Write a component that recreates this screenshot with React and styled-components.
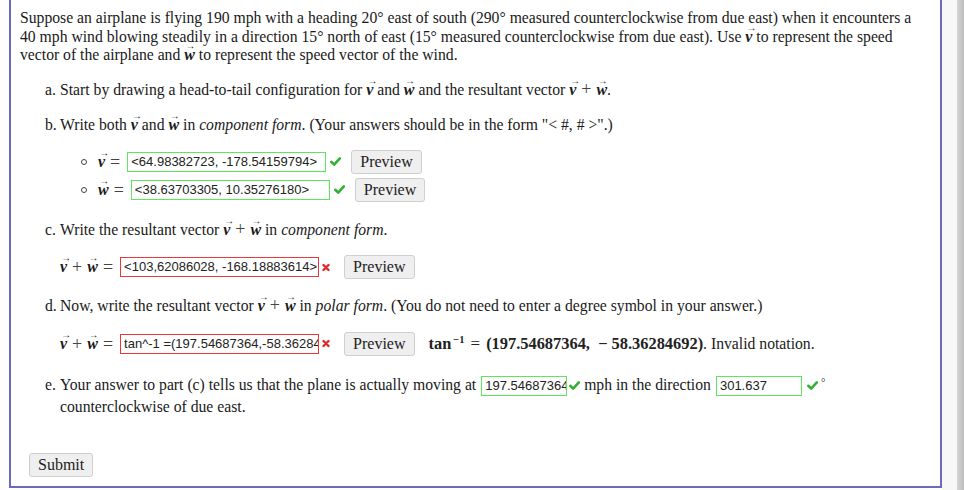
import React from 'react';
import styled, { createGlobalStyle } from 'styled-components';

const GlobalStyle = createGlobalStyle`
  html, body {
    margin: 0;
    padding: 0;
    background: #ffffff;
    overflow: hidden;
  }
  body {
    font-family: "Liberation Serif", "Times New Roman", serif;
    color: #1a1a1a;
  }
`;

const Screen = styled.div`
  display: flex;
  height: 490px;
  width: 964px;
`;

const Main = styled.div`
  width: 942px;
  padding-left: 9px;
  box-sizing: border-box;
  background: #ffffff;
`;

const Gutter = styled.div`
  width: 15px;
  background: #f7f7f7;
`;

const ScrollBar = styled.div`
  width: 7px;
  background: linear-gradient(to right, #d4d4d4, #bdbdbd);
`;

const Problem = styled.div`
  height: 488px;
  box-sizing: border-box;
  border: 2px solid #6b6bbd;
  border-top: none;
  padding: 9px 9px 0 9px;
  display: flex;
  flex-direction: column;
`;

const Intro = styled.p`
  margin: 0 0 15px;
  font-size: 15.7px;
  line-height: 18.5px;
  white-space: nowrap;
`;

const Parts = styled.div`
  display: flex;
  flex-direction: column;
  padding-left: 25px;
`;

const Part = styled.div`
  display: flex;
  align-items: baseline;
  font-size: 15.7px;
  line-height: 18.5px;
  margin-bottom: ${p => p.$gap ?? 17}px;
`;

const Marker = styled.span`
  width: 15px;
  flex: none;
`;

const PartBody = styled.div`
  flex: 1;
`;

const Em = styled.em`
  font-style: italic;
`;

const Vec = styled.span`
  position: relative;
  display: inline-block;
  font-style: italic;
  font-weight: bold;
  font-size: 16px;
  line-height: 1;
  &::after {
    content: "→";
    position: absolute;
    left: 0.12em;
    top: -0.58em;
    font-size: 0.62em;
    font-style: normal;
    font-weight: normal;
  }
`;

const Op = styled.span`
  font-size: 18px;
  line-height: 1;
  color: #444;
  margin: 0 5px;
`;

const MathGroup = styled.span`
  white-space: nowrap;
`;

const AnswerRows = styled.div`
  display: flex;
  flex-direction: column;
  gap: 4px;
  margin: 15px 0 18px 36px;
`;

const Row = styled.div`
  display: flex;
  align-items: center;
  height: 24px;
  font-size: 15.7px;
  margin-left: ${p => p.$ml || 0}px;
  margin-bottom: ${p => p.$gap || 0}px;
`;

const Bullet = styled.span`
  width: 4px;
  height: 4px;
  border: 1.2px solid #444;
  border-radius: 50%;
  margin-right: 11px;
`;

const Answer = styled.span`
  display: inline-block;
  vertical-align: middle;
  box-sizing: border-box;
  width: ${p => p.$w}px;
  height: 20px;
  line-height: 18px;
  padding-left: 3px;
  border: 1.5px solid ${p => (p.$ok ? '#5ee65e' : '#e83a3a')};
  font-family: "Liberation Sans", Arial, sans-serif;
  font-size: 13px;
  color: #222;
  overflow: hidden;
  white-space: nowrap;
  margin-left: ${p => p.$ml ?? 7}px;
`;

const MarkBox = styled.svg`
  display: inline-block;
  vertical-align: middle;
  flex: none;
  margin-left: ${p => p.$ml ?? 5}px;
`;

const Check = ({ ml }) => (
  <MarkBox $ml={ml} width="11" height="9" viewBox="0 0 11 9">
    <path d="M1.3 4.8 L4.2 7.6 L9.8 1.4" fill="none" stroke="#33b033" strokeWidth="2.6" strokeLinecap="round" strokeLinejoin="round" />
  </MarkBox>
);

const Cross = ({ ml }) => (
  <MarkBox $ml={ml} width="8" height="9" viewBox="0 0 8 9">
    <path d="M1.5 2 L6.5 7 M6.5 2 L1.5 7" fill="none" stroke="#e02828" strokeWidth="2.4" strokeLinecap="round" />
  </MarkBox>
);

const PreviewButton = styled.button`
  height: 24px;
  padding: 0 8px;
  margin-left: ${p => p.$ml ?? 10}px;
  background: #efefef;
  border: 1px solid #cfcfcf;
  border-radius: 3px;
  font-family: "Liberation Serif", "Times New Roman", serif;
  font-size: 16px;
  color: #222;
`;

const Feedback = styled.span`
  margin-left: 14px;
  font-size: 15.7px;
  white-space: nowrap;
`;

const MathBold = styled.span`
  font-weight: bold;
  font-size: 16.4px;
  color: #222;
`;

const MathEq = styled.span`
  margin: 0 6px;
  font-weight: normal;
  font-size: 17px;
`;

const Sup = styled.sup`
  font-size: 10.5px;
  font-weight: bold;
  vertical-align: 6px;
  margin-left: 2px;
`;

const InlineLines = styled.div`
  line-height: 22px;
  white-space: nowrap;
`;

const Degree = styled.span`
  font-size: 11px;
  vertical-align: 4px;
  margin-left: 3px;
`;

const SubmitButton = styled.button`
  align-self: flex-start;
  margin: 35px 0 0 9px;
  height: 24px;
  padding: 0 8px;
  background: #efefef;
  border: 1px solid #cfcfcf;
  border-radius: 3px;
  font-family: "Liberation Serif", "Times New Roman", serif;
  font-size: 16px;
  color: #222;
`;

const V = () => <Vec>v</Vec>;
const W = () => <Vec>w</Vec>;

export default function App() {
  return (
    <>
      <GlobalStyle />
      <Screen>
        <Main>
          <Problem>
            <Intro>
              Suppose an airplane is flying 190 mph with a heading 20° east of south (290° measured counterclockwise from due east) when it encounters a<br />
              40 mph wind blowing steadily in a direction 15° north of east (15° measured counterclockwise from due east). Use <V /> to represent the speed<br />
              vector of the airplane and <W /> to represent the speed vector of the wind.
            </Intro>
            <Parts>
              <Part $gap={17}>
                <Marker>a.</Marker>
                <PartBody>
                  Start by drawing a head-to-tail configuration for <V /> and <W /> and the resultant vector <MathGroup><V /><Op>+</Op><W />.</MathGroup>
                </PartBody>
              </Part>
              <Part $gap={0}>
                <Marker>b.</Marker>
                <PartBody>
                  Write both <V /> and <W /> in <Em>component form</Em>. (Your answers should be in the form "&lt; #, # &gt;".)
                </PartBody>
              </Part>
              <AnswerRows>
                <Row>
                  <Bullet />
                  <V /><Op>=</Op>
                  <Answer $ok $w={199} $ml={2}>&lt;64.98382723, -178.54159794&gt;</Answer>
                  <Check ml={4} />
                  <PreviewButton>Preview</PreviewButton>
                </Row>
                <Row>
                  <Bullet />
                  <W /><Op>=</Op>
                  <Answer $ok $w={199} $ml={2}>&lt;38.63703305, 10.35276180&gt;</Answer>
                  <Check ml={4} />
                  <PreviewButton>Preview</PreviewButton>
                </Row>
              </AnswerRows>
              <Part $gap={16}>
                <Marker>c.</Marker>
                <PartBody>
                  Write the resultant vector <MathGroup><V /><Op>+</Op><W /></MathGroup> in <Em>component form</Em>.
                </PartBody>
              </Part>
              <Row $gap={17} $ml={15}>
                <V /><Op>+</Op><W /><Op>=</Op>
                <Answer $w={199} $ml={2}>&lt;103,62086028, -168.18883614&gt;</Answer>
                <Cross ml={3} />
                <PreviewButton $ml={14}>Preview</PreviewButton>
              </Row>
              <Part $gap={16}>
                <Marker>d.</Marker>
                <PartBody>
                  Now, write the resultant vector <MathGroup><V /><Op>+</Op><W /></MathGroup> in <Em>polar form</Em>. (You do not need to enter a degree symbol in your answer.)
                </PartBody>
              </Part>
              <Row $gap={15} $ml={15}>
                <V /><Op>+</Op><W /><Op>=</Op>
                <Answer $w={199} $ml={2}>tan^-1 =(197.54687364,-58.36284692)</Answer>
                <Cross ml={3} />
                <PreviewButton $ml={14}>Preview</PreviewButton>
                <Feedback>
                  <MathBold>tan<Sup>−1</Sup><MathEq>=</MathEq>(197.54687364, &nbsp;− 58.36284692)</MathBold>. Invalid notation.
                </Feedback>
              </Row>
              <Part $gap={0}>
                <Marker>e.</Marker>
                <PartBody>
                  <InlineLines>
                    Your answer to part (c) tells us that the plane is actually moving at
                    <Answer $ok $w={86} $ml={5}>197.54687364</Answer>
                    <Check ml={2} /> mph in the direction
                    <Answer $ok $w={86} $ml={5}>301.637</Answer>
                    <Check ml={5} /><Degree>°</Degree>
                    <br />
                    counterclockwise of due east.
                  </InlineLines>
                </PartBody>
              </Part>
            </Parts>
            <SubmitButton>Submit</SubmitButton>
          </Problem>
        </Main>
        <Gutter />
        <ScrollBar />
      </Screen>
    </>
  );
}
